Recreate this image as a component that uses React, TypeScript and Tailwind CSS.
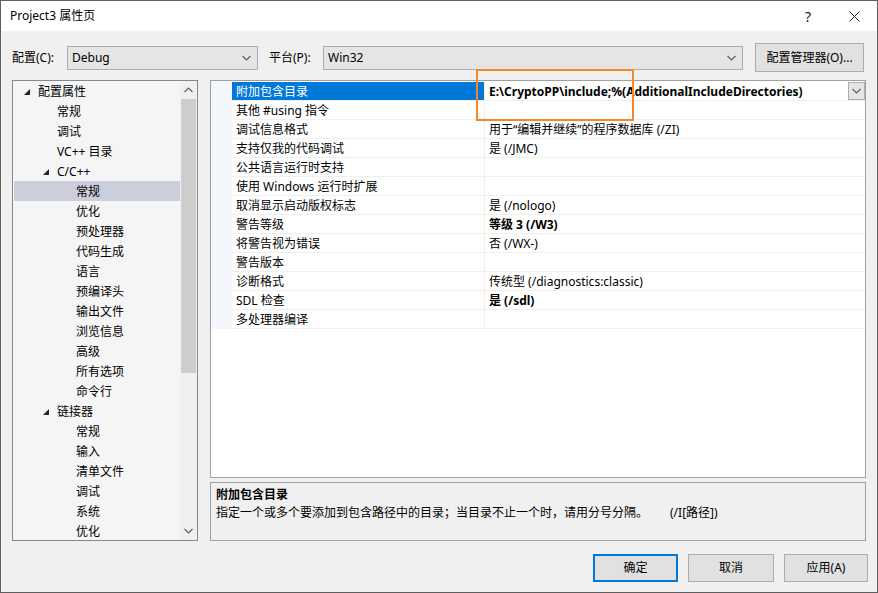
import React from "react";

const FONT = { fontFamily: '"Segoe UI", "Noto Sans", "Noto Sans CJK SC", sans-serif' };

type TreeItem = { label: string; level: number; expanded?: boolean; selected?: boolean };

const treeItems: TreeItem[] = [
  { label: "配置属性", level: 0, expanded: true },
  { label: "常规", level: 1 },
  { label: "调试", level: 1 },
  { label: "VC++ 目录", level: 1 },
  { label: "C/C++", level: 1, expanded: true },
  { label: "常规", level: 2, selected: true },
  { label: "优化", level: 2 },
  { label: "预处理器", level: 2 },
  { label: "代码生成", level: 2 },
  { label: "语言", level: 2 },
  { label: "预编译头", level: 2 },
  { label: "输出文件", level: 2 },
  { label: "浏览信息", level: 2 },
  { label: "高级", level: 2 },
  { label: "所有选项", level: 2 },
  { label: "命令行", level: 2 },
  { label: "链接器", level: 1, expanded: true },
  { label: "常规", level: 2 },
  { label: "输入", level: 2 },
  { label: "清单文件", level: 2 },
  { label: "调试", level: 2 },
  { label: "系统", level: 2 },
  { label: "优化", level: 2 },
];

const props: { name: string; value: string; bold?: boolean }[] = [
  { name: "附加包含目录", value: "E:\\CryptoPP\\include;%(AdditionalIncludeDirectories)", bold: true },
  { name: "其他 #using 指令", value: "" },
  { name: "调试信息格式", value: "用于“编辑并继续”的程序数据库 (/ZI)" },
  { name: "支持仅我的代码调试", value: "是 (/JMC)" },
  { name: "公共语言运行时支持", value: "" },
  { name: "使用 Windows 运行时扩展", value: "" },
  { name: "取消显示启动版权标志", value: "是 (/nologo)" },
  { name: "警告等级", value: "等级 3 (/W3)", bold: true },
  { name: "将警告视为错误", value: "否 (/WX-)" },
  { name: "警告版本", value: "" },
  { name: "诊断格式", value: "传统型 (/diagnostics:classic)" },
  { name: "SDL 检查", value: "是 (/sdl)", bold: true },
  { name: "多处理器编译", value: "" },
];

function Chevron({ up = false, className = "" }: { up?: boolean; className?: string }) {
  return (
    <svg width="9" height="6" viewBox="0 0 9 6" className={className}>
      <polyline
        points={up ? "0.5,5 4.5,1 8.5,5" : "0.5,1 4.5,5 8.5,1"}
        fill="none"
        stroke="currentColor"
        strokeWidth="1.2"
      />
    </svg>
  );
}

function Expander() {
  return (
    <svg width="6" height="6" viewBox="0 0 6 6">
      <polygon points="6,0 6,6 0,6" fill="#262626" />
    </svg>
  );
}

function Combo({ value, width }: { value: string; width: string }) {
  return (
    <div className={`${width} h-[24px] flex items-center justify-between border border-[#adadad] bg-[#e5e5e5] pl-[4px] pr-[6px]`}>
      <span>{value}</span>
      <Chevron className="text-[#606060]" />
    </div>
  );
}

export default function App() {
  return (
    <div
      style={FONT}
      className="w-[878px] h-[593px] flex flex-col border border-[#5f5f5f] bg-[#f0f0f0] text-[12px] text-black overflow-hidden"
    >
      {/* Title bar */}
      <div className="h-[30px] bg-white flex items-center justify-between shrink-0">
        <span className="pl-[9px]">Project3 属性页</span>
        <div className="flex h-full">
          <div className="w-[46px] h-full flex items-center justify-center text-[14px] text-[#1a1a1a]">?</div>
          <div className="w-[46px] h-full flex items-center justify-center">
            <svg width="11" height="11" viewBox="0 0 11 11">
              <path d="M0.5 0.5 L10.5 10.5 M10.5 0.5 L0.5 10.5" stroke="#1a1a1a" strokeWidth="1" />
            </svg>
          </div>
        </div>
      </div>

      <div className="flex-1 flex flex-col px-[11px]">
        {/* Configuration row */}
        <div className="mt-[12px] h-[29px] flex items-center">
          <span className="w-[55px]">配置(C):</span>
          <Combo value="Debug" width="w-[191px]" />
          <span className="ml-[11px] w-[54px]">平台(P):</span>
          <Combo value="Win32" width="w-[420px]" />
          <button className="ml-[12px] w-[109px] h-[29px] border border-[#adadad] bg-[#e1e1e1]">
            配置管理器(O)...
          </button>
        </div>

        {/* Main area */}
        <div className="mt-[8px] h-[461px] flex gap-[12px]">
          {/* Tree */}
          <div className="w-[186px] h-full border border-[#828790] bg-[#f5f5f5] flex overflow-hidden">
            <div className="flex-1 overflow-hidden">
              {treeItems.map((item, i) => (
                <div
                  key={i}
                  className={`h-[20px] ml-[1px] pt-[2px] flex items-center ${item.selected ? "bg-[#cccedb]" : ""}`}
                >
                  <div className="flex items-center" style={{ paddingLeft: 10 + item.level * 19 }}>
                    <span className="w-[14px] flex items-center">{item.expanded && <Expander />}</span>
                    <span>{item.label}</span>
                  </div>
                </div>
              ))}
            </div>
            <div className="w-[17px] h-full bg-[#f0f0f0] flex flex-col">
              <div className="h-[18px] flex items-center justify-center text-[#606060]">
                <Chevron up />
              </div>
              <div className="h-[274px] mx-[1px] bg-[#cdcdcd]" />
              <div className="flex-1" />
              <div className="h-[18px] flex items-center justify-center text-[#606060]">
                <Chevron />
              </div>
            </div>
          </div>

          {/* Right column */}
          <div className="w-[656px] h-full flex flex-col gap-[4px]">
            <div className="relative h-[398px] border border-[#a0a0a0] bg-white">
              <div className="h-[1px] w-[21px] bg-[#f3f6fb]" />
              {props.map((p, i) => (
                <div key={i} className="h-[19px] flex">
                  <div className="w-[21px] bg-[#f3f6fb]" />
                  <div className="flex-1 flex border-b border-[#efefef]">
                    <div
                      className={`w-[252px] pl-[4px] pt-[1px] flex items-center ${
                        i === 0 ? "bg-[#0078d7] text-white" : ""
                      }`}
                    >
                      {p.name}
                    </div>
                    <div
                      className={`flex-1 flex items-center justify-between pl-[4px] border-l border-[#efefef] ${
                        p.bold ? "font-bold" : ""
                      }`}
                    >
                      <span className="pt-[1px]">{p.value}</span>
                      {i === 0 && (
                        <div className="w-[17px] h-[18px] border border-[#adadad] bg-[#e5e5e5] flex items-center justify-center text-[#606060]">
                          <Chevron />
                        </div>
                      )}
                    </div>
                  </div>
                </div>
              ))}
              {/* annotation box */}
              <div className="absolute left-[265px] top-[-12px] w-[158px] h-[52px] border-2 border-[#f5862a] pointer-events-none" />
            </div>

            <div className="h-[59px] border border-[#a0a0a0] bg-[#f0f0f0] px-[5px] pt-[3px]">
              <div className="font-bold leading-[18px]">附加包含目录</div>
              <div className="leading-[18px]">
                指定一个或多个要添加到包含路径中的目录；当目录不止一个时，请用分号分隔。
                <span className="ml-[22px]">(/I[路径])</span>
              </div>
            </div>
          </div>
        </div>

        {/* Buttons */}
        <div className="mt-[13px] flex justify-end gap-[10px] -mr-[2px]">
          <button className="w-[85px] h-[28px] border-2 border-[#0078d7] bg-[#e1e1e1]">确定</button>
          <button className="w-[86px] h-[28px] border border-[#adadad] bg-[#e1e1e1]">取消</button>
          <button className="w-[84px] h-[28px] border border-[#adadad] bg-[#e1e1e1]">应用(A)</button>
        </div>
      </div>
    </div>
  );
}
